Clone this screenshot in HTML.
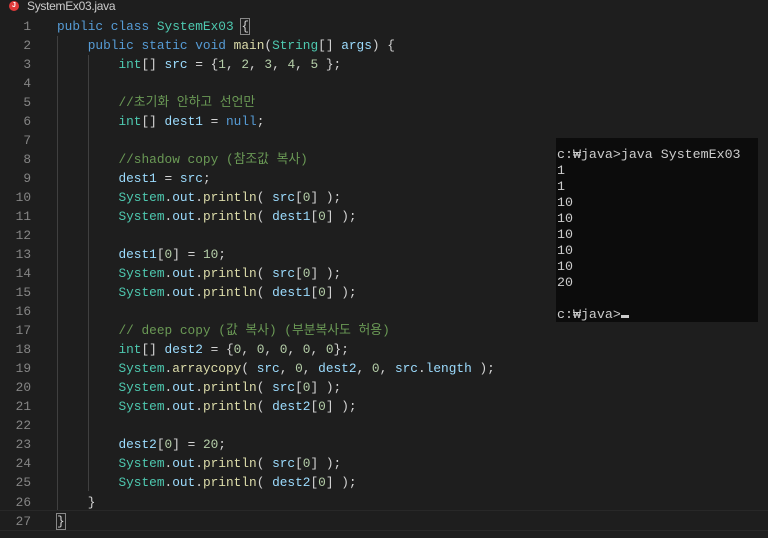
<!DOCTYPE html><html><head><style>
body{margin:0;width:768px;height:538px;background:#1e1e1e;overflow:hidden;position:relative;font-family:"Liberation Mono",monospace}
.tab{position:absolute;left:0;top:0;height:13px;width:768px;background:#1e1e1e}
.tab .ic{position:absolute;left:9px;top:1px;width:10px;height:10px;border-radius:50%;background:#e03a3a;color:#fff;font:bold 7px "Liberation Sans",sans-serif;text-align:center;line-height:10px}
.tab .t{position:absolute;left:27px;top:-1px;font:12px "Liberation Sans",sans-serif;color:#ccc;letter-spacing:-0.3px}
.ln{position:absolute;left:0;width:31px;text-align:right;color:#858585;font-size:12.8px;line-height:19px;height:19px}
.cd{position:absolute;left:57px;white-space:pre;color:#d4d4d4;font-size:12.8px;line-height:19px;height:19px}
.k{color:#569cd6}.ty{color:#4ec9b0}.v{color:#9cdcfe}.f{color:#dcdcaa}.n{color:#b5cea8}.c{color:#6a9955;font-family:"Liberation Mono","Noto Sans CJK KR",monospace;line-height:19px}
.g{position:absolute;width:1px;background:#404040}
.term{position:absolute;left:556px;top:138px;width:202px;height:184px;background:#0c0c0c;color:#ccc;font-size:13.3px;line-height:16px;white-space:pre;padding:9px 0 0 1px;box-sizing:border-box;font-family:"Liberation Mono","Noto Sans CJK KR",monospace}
</style></head><body>
<div class="tab"><div class="ic">J</div><div class="t">SystemEx03.java</div></div>
<div style="position:absolute;left:0;top:510px;width:768px;height:19px;border-top:1px solid #282828;border-bottom:1px solid #282828"></div>
<div class="g" style="left:57px;top:36px;height:474px"></div>
<div class="g" style="left:88px;top:55px;height:436px"></div>
<div id="code"></div>
<div class="term">c:₩java&gt;java SystemEx03
1
1
10
10
10
10
10
20

c:₩java&gt;<span style="display:inline-block;width:8px;height:3px;background:#ccc"></span></div>
<script>
var L=[
'<span class="k">public</span> <span class="k">class</span> <span class="ty">SystemEx03</span> <span style="outline:1px solid #888">{</span>',
'    <span class="k">public</span> <span class="k">static</span> <span class="k">void</span> <span class="f">main</span>(<span class="ty">String</span>[] <span class="v">args</span>) {',
'        <span class="ty">int</span>[] <span class="v">src</span> = {<span class="n">1</span>, <span class="n">2</span>, <span class="n">3</span>, <span class="n">4</span>, <span class="n">5</span> };',
'',
'        <span class="c">//초기화 안하고 선언만</span>',
'        <span class="ty">int</span>[] <span class="v">dest1</span> = <span class="k">null</span>;',
'',
'        <span class="c">//shadow copy (참조값 복사)</span>',
'        <span class="v">dest1</span> = <span class="v">src</span>;',
'        <span class="ty">System</span>.<span class="v">out</span>.<span class="f">println</span>( <span class="v">src</span>[<span class="n">0</span>] );',
'        <span class="ty">System</span>.<span class="v">out</span>.<span class="f">println</span>( <span class="v">dest1</span>[<span class="n">0</span>] );',
'',
'        <span class="v">dest1</span>[<span class="n">0</span>] = <span class="n">10</span>;',
'        <span class="ty">System</span>.<span class="v">out</span>.<span class="f">println</span>( <span class="v">src</span>[<span class="n">0</span>] );',
'        <span class="ty">System</span>.<span class="v">out</span>.<span class="f">println</span>( <span class="v">dest1</span>[<span class="n">0</span>] );',
'',
'        <span class="c">// deep copy (값 복사) (부분복사도 허용)</span>',
'        <span class="ty">int</span>[] <span class="v">dest2</span> = {<span class="n">0</span>, <span class="n">0</span>, <span class="n">0</span>, <span class="n">0</span>, <span class="n">0</span>};',
'        <span class="ty">System</span>.<span class="f">arraycopy</span>( <span class="v">src</span>, <span class="n">0</span>, <span class="v">dest2</span>, <span class="n">0</span>, <span class="v">src</span>.<span class="v">length</span> );',
'        <span class="ty">System</span>.<span class="v">out</span>.<span class="f">println</span>( <span class="v">src</span>[<span class="n">0</span>] );',
'        <span class="ty">System</span>.<span class="v">out</span>.<span class="f">println</span>( <span class="v">dest2</span>[<span class="n">0</span>] );',
'',
'        <span class="v">dest2</span>[<span class="n">0</span>] = <span class="n">20</span>;',
'        <span class="ty">System</span>.<span class="v">out</span>.<span class="f">println</span>( <span class="v">src</span>[<span class="n">0</span>] );',
'        <span class="ty">System</span>.<span class="v">out</span>.<span class="f">println</span>( <span class="v">dest2</span>[<span class="n">0</span>] );',
'    }',
'<span style="outline:1px solid #888">}</span>'];
var h='';
for(var i=0;i<L.length;i++){var t=16.5+i*19.04;
h+='<div class="ln" style="top:'+t+'px">'+(i+1)+'</div><div class="cd" style="top:'+t+'px">'+L[i]+'</div>';}
document.getElementById('code').innerHTML=h;
</script>
</body></html>
